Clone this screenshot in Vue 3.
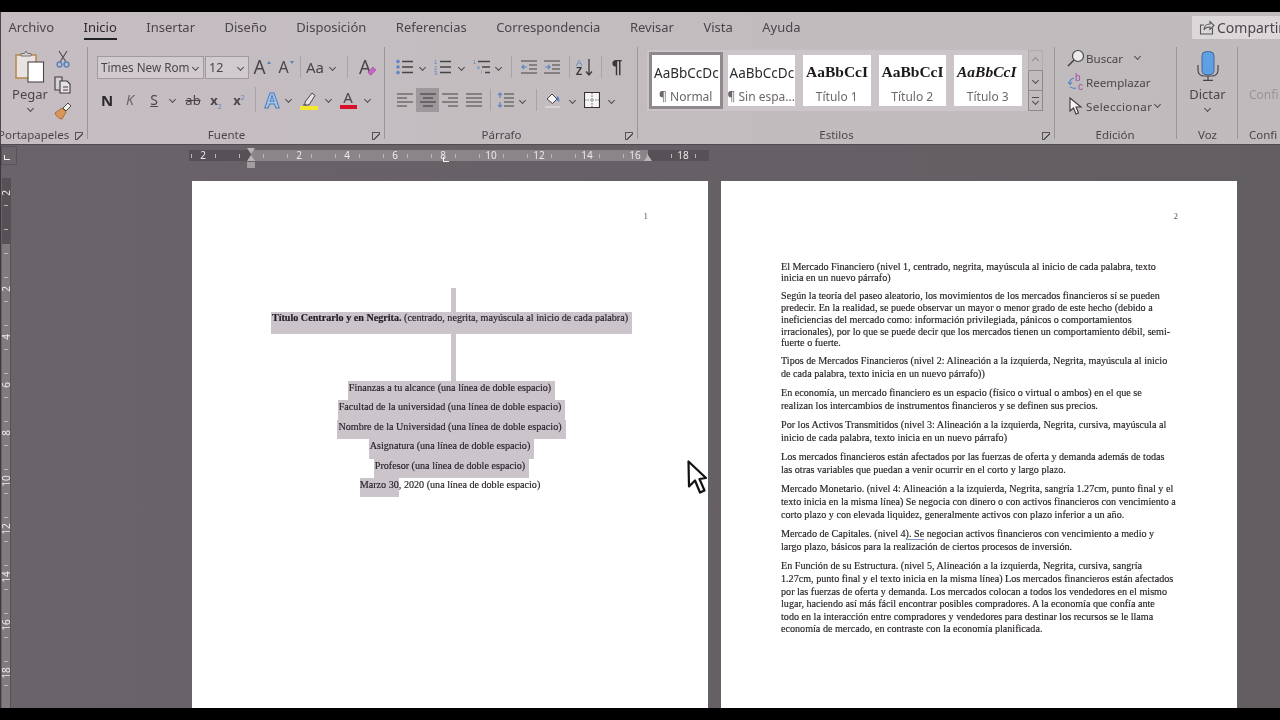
<script setup>
// marcas de la regla: numero cada 2 cm, raya a cada lado, hueco en el cm impar
function buildCells(from, to) {
  const cells = []
  for (let k = from; k <= to; k++) {
    let kind = 'none'
    if (k !== 0 && k % 4 === 0) kind = 'num'
    else if (k % 2 !== 0) kind = 'tick'
    cells.push({ k, kind, text: Math.abs(k / 2) })
  }
  return cells
}

const hCells = buildCells(-5, 37)
const vCells = buildCells(-4, 38)

const tabs = ['Archivo', 'Inicio', 'Insertar', 'Diseño', 'Disposición', 'Referencias', 'Correspondencia', 'Revisar', 'Vista', 'Ayuda']

const styles = [
  { sample: 'AaBbCcDc', name: '¶ Normal', kind: 'normal selected' },
  { sample: 'AaBbCcDc', name: '¶ Sin espa...', kind: 'normal' },
  { sample: 'AaBbCcI', name: 'Título 1', kind: 'heading' },
  { sample: 'AaBbCcI', name: 'Título 2', kind: 'heading' },
  { sample: 'AaBbCcI', name: 'Título 3', kind: 'heading italic' }
]
</script>

<template>
  <div class="app">
    <div class="topbar"></div>

    <!-- pestañas -->
    <div class="tabs">
      <span v-for="t in tabs" :key="t" class="tab" :class="{ active: t === 'Inicio' }">{{ t }}</span>
      <div class="share">
        <svg width="16" height="15" viewBox="0 0 16 15" fill="none" stroke="#555" stroke-width="1.1">
          <path d="M5 5H1.5v9h12V8" />
          <path d="M5 10c0-4 3-6 6-6V1.5l4 4-4 4V7c-3 0-5 1-6 3z" />
        </svg>
        <span>Compartir</span>
      </div>
    </div>

    <!-- cinta de opciones -->
    <div class="ribbon">
      <section class="grp grp-clip">
        <div class="grp-body clip-body">
          <div class="big-col paste">
            <svg width="30" height="33" viewBox="0 0 30 33">
              <rect x="1" y="5" width="20" height="23" fill="#e9e4e2" stroke="#b98a52" stroke-width="1.6" />
              <path d="M6 6V3.5h3.5L11 1l1.5 2.5H16V6z" fill="#d8d3d3" stroke="#77716f" />
              <rect x="13" y="12" width="15.5" height="20" fill="#fff" stroke="#4a4548" stroke-width="1.1" />
            </svg>
            <span class="big-label">Pegar</span>
            <i class="chev"></i>
          </div>
          <div class="clip-tools">
            <svg width="14" height="18" viewBox="0 0 14 18" fill="none">
              <path d="M3 1l7 11M11 1L4 12" stroke="#55505a" stroke-width="1.2" />
              <circle cx="3.5" cy="14.5" r="2.4" stroke="#5a83bd" stroke-width="1.5" />
              <circle cx="10.5" cy="14.5" r="2.4" stroke="#5a83bd" stroke-width="1.5" />
            </svg>
            <svg width="18" height="18" viewBox="0 0 18 18" fill="#d6d1d4" stroke="#3f3a3f" stroke-width="1.1">
              <path d="M1 1h7v13H1z" />
              <path d="M6 5h7l3 3v9H6z" fill="#e6e2e4" />
              <path d="M9 11h5M9 14h5" />
            </svg>
            <svg width="18" height="18" viewBox="0 0 18 18">
              <path d="M9 6l5-5 3 3-5 5z" fill="#f2efe9" stroke="#4d484c" />
              <path d="M1 11l7-5 4 4-4 7c-3 0-6-3-7-6z" fill="#d9955a" stroke="#a66d3a" />
            </svg>
          </div>
        </div>
        <div class="grp-label clip-label">Portapapeles</div>
        <i class="launcher"></i>
      </section>

      <section class="grp grp-font">
        <div class="grp-body">
          <div class="font-row1">
            <div class="combo combo-font"><span>Times New Rom</span><i class="chev"></i></div>
            <div class="combo combo-size"><span>12</span><i class="chev"></i></div>
            <span class="cell"><span class="glyph-a">A</span><i class="caret up"></i></span>
            <span class="cell"><span class="glyph-a small">A</span><i class="caret down"></i></span>
            <i class="vsep"></i>
            <span class="cell"><span class="glyph-aa">Aa</span></span>
            <i class="chev"></i>
            <i class="vsep"></i>
            <span class="cell clear-fmt">
              <span class="glyph-a">A</span>
              <svg class="eraser" width="10" height="10" viewBox="0 0 10 10"><path d="M1 6l5-5 3 3-5 5H3z" fill="#c763c4" stroke="#9a4d9e" stroke-width=".6" /></svg>
            </span>
          </div>
          <div class="font-row2">
            <b class="fmt bold">N</b>
            <i class="fmt ital">K</i>
            <u class="fmt">S</u>
            <i class="chev"></i>
            <s class="fmt strike">ab</s>
            <span class="fmt sx">x<sub>2</sub></span>
            <span class="fmt sx">x<sup>2</sup></span>
            <i class="vsep tall sep-start"></i>
            <span class="effect-a">A</span>
            <i class="chev"></i>
            <svg width="20" height="20" viewBox="0 0 20 20">
              <path d="M6 12l7-9 3 2.500-6 9.500H6z" fill="#e6e1e3" stroke="#4a4548" />
              <path d="M4 15h3" stroke="#4a4548" />
              <rect x="1" y="16" width="18" height="4.500" fill="#f3e82e" />
            </svg>
            <i class="chev"></i>
            <span class="color-a">A<i></i></span>
            <i class="chev"></i>
          </div>
        </div>
        <div class="grp-label shift-label">Fuente</div>
        <i class="launcher"></i>
      </section>

      <section class="grp grp-para">
        <div class="grp-body">
          <div class="para-row1">
            <svg width="17" height="16" viewBox="0 0 17 16" stroke="#444" stroke-width="1.300">
              <path d="M6 2.500h11M6 8h11M6 13.500h11" />
              <g fill="#5d85c2" stroke="none"><circle cx="2" cy="2.500" r="1.800" /><circle cx="2" cy="8" r="1.800" /><circle cx="2" cy="13.500" r="1.800" /></g>
            </svg>
            <i class="chev"></i>
            <svg width="17" height="16" viewBox="0 0 17 16" stroke="#444" stroke-width="1.300">
              <path d="M6 2.500h11M6 8h11M6 13.500h11" />
              <g fill="#5d85c2" stroke="none" font-size="6" font-family="Liberation Sans, sans-serif"><text x="0" y="5">1</text><text x="0" y="10.500">2</text><text x="0" y="16">3</text></g>
            </svg>
            <i class="chev"></i>
            <svg width="17" height="16" viewBox="0 0 17 16" stroke="#444" stroke-width="1.300">
              <path d="M5 2.500h12M9 8h8M12 13.500h5" />
              <g fill="#5d85c2" stroke="none" font-size="5" font-family="Liberation Sans, sans-serif"><text x="0" y="5">1</text><text x="4" y="10">a</text><text x="8" y="15">i</text></g>
            </svg>
            <i class="chev"></i>
            <i class="vsep"></i>
            <svg width="16" height="14" viewBox="0 0 16 14" fill="none" stroke="#444" stroke-width="1.200">
              <path d="M0 1h16M8 5h8M8 9h8M0 13h16" />
              <path d="M6 7H1M3 5L1 7l2 2" stroke="#5d85c2" />
            </svg>
            <svg width="16" height="14" viewBox="0 0 16 14" fill="none" stroke="#444" stroke-width="1.200">
              <path d="M0 1h16M8 5h8M8 9h8M0 13h16" />
              <path d="M1 7h5M4 5l2 2-2 2" stroke="#5d85c2" />
            </svg>
            <i class="vsep"></i>
            <svg class="sort-icon" width="18" height="18" viewBox="0 0 18 18" fill="none" font-family="Liberation Sans, sans-serif">
              <text x="0" y="8" font-size="9.500" fill="#5d85c2">A</text>
              <text x="0" y="17" font-size="10" font-weight="700" fill="#333">Z</text>
              <path d="M13 1v16M10 13.500l3 3.500 3-3.500" stroke="#3d383d" stroke-width="1.300" />
            </svg>
            <i class="vsep"></i>
            <span class="pilcrow">¶</span>
          </div>
          <div class="para-row2">
            <svg width="16" height="14" viewBox="0 0 16 14" stroke="#444" stroke-width="1.200"><path d="M0 1h16M0 5h10M0 9h16M0 13h10" /></svg>
            <span class="align-on">
              <svg width="16" height="14" viewBox="0 0 16 14" stroke="#333" stroke-width="1.200"><path d="M0 1h16M3 5h10M0 9h16M3 13h10" /></svg>
            </span>
            <svg width="16" height="14" viewBox="0 0 16 14" stroke="#444" stroke-width="1.200"><path d="M0 1h16M6 5h10M0 9h16M6 13h10" /></svg>
            <svg width="16" height="14" viewBox="0 0 16 14" stroke="#444" stroke-width="1.200"><path d="M0 1h16M0 5h16M0 9h16M0 13h16" /></svg>
            <i class="vsep"></i>
            <svg width="17" height="16" viewBox="0 0 17 16" fill="none" stroke="#444" stroke-width="1.200">
              <path d="M7 2h10M7 6h10M7 10h10M7 14h10" />
              <path d="M3 1v5M1 3l2-2 2 2M3 10v5M1 13l2 2 2-2" stroke="#5d85c2" />
            </svg>
            <i class="chev"></i>
            <i class="vsep"></i>
            <svg width="16" height="17" viewBox="0 0 16 17">
              <path d="M2 7l5-5 5 5-4.500 4.500z" fill="#f4f2f2" stroke="#444" />
              <path d="M12 4c2 1 3 3 2 6-2-1-3-3-2-6z" fill="#5d85c2" />
              <rect x="0" y="14" width="15" height="2" fill="#d7d2d5" />
            </svg>
            <i class="chev"></i>
            <svg width="16" height="16" viewBox="0 0 16 16" fill="#f7f6f7" stroke="#333" stroke-width="1.100">
              <path d="M.5.500h15v15H.5z" />
              <path d="M8 1v14M1 8h14" stroke="#777" stroke-dasharray="1.500 1" />
            </svg>
            <i class="chev"></i>
          </div>
        </div>
        <div class="grp-label shift-label">Párrafo</div>
        <i class="launcher"></i>
      </section>

      <section class="grp grp-styles">
        <div class="grp-body">
          <div class="gallery">
            <div class="cards">
              <div v-for="s in styles" :key="s.name" class="card" :class="s.kind">
                <span class="card-sample">{{ s.sample }}</span>
                <span class="card-name">{{ s.name }}</span>
              </div>
            </div>
            <div class="scroller">
              <span class="scroll-btn disabled"><i class="chev flip"></i></span>
              <span class="scroll-btn"><i class="chev"></i></span>
              <span class="scroll-btn more"><i class="bar"></i><i class="chev"></i></span>
            </div>
          </div>
        </div>
        <div class="grp-label shift-label">Estilos</div>
        <i class="launcher"></i>
      </section>

      <section class="grp grp-edit">
        <div class="grp-body edit-body">
          <div class="edit-row">
            <svg width="18" height="18" viewBox="0 0 18 18" fill="none">
              <circle cx="11" cy="7" r="5.500" fill="#eeeaec" stroke="#444" stroke-width="1.200" />
              <path d="M7 11l-6 6" stroke="#444" stroke-width="1.600" />
            </svg>
            <span class="edit-text">Buscar</span><i class="chev buscar-chev"></i>
          </div>
          <div class="edit-row">
            <svg width="18" height="18" viewBox="0 0 18 18" fill="none">
              <text x="8" y="8" font-size="10" fill="#a24fa8" font-family="Liberation Sans, sans-serif">b</text>
              <text x="11" y="17" font-size="10" fill="#a24fa8" font-family="Liberation Sans, sans-serif">c</text>
              <path d="M7 5C3 6 2 9 3 11M1 9l2 2.500L5 9M9 15c-2 1-4 0-6-1" stroke="#5d85c2" stroke-width="1.200" />
            </svg>
            <span class="edit-text">Reemplazar</span>
          </div>
          <div class="edit-row">
            <svg width="16" height="18" viewBox="0 0 16 18">
              <path d="M2 1v13l3.500-3 2.500 6 2.500-1-2.500-6H13z" fill="#f5f3f4" stroke="#3d383d" stroke-width="1.100" />
            </svg>
            <span class="edit-text wide">Seleccionar</span><i class="chev select-chev"></i>
          </div>
        </div>
        <div class="grp-label edit-label">Edición</div>
      </section>

      <section class="grp grp-voice">
        <div class="grp-body">
          <div class="big-col dictar">
            <svg width="22" height="30" viewBox="0 0 22 30" fill="none">
              <rect x="5" y="0.700" width="12" height="23" rx="4" fill="#5f9fe3" stroke="#40699c" />
              <path d="M1 14v5c0 4 3 6 6 6h8c3 0 6-2 6-6v-5" stroke="#4a4548" stroke-width="1.200" />
              <path d="M11 25v4M6 29.300h10" stroke="#4a4548" stroke-width="1.200" />
            </svg>
            <span class="big-label">Dictar</span>
            <i class="chev"></i>
          </div>
        </div>
        <div class="grp-label">Voz</div>
      </section>

      <section class="grp grp-conf">
        <div class="grp-body conf-body"><span class="conf-off">Confi</span></div>
        <div class="grp-label conf-label">Confi</div>
      </section>
    </div>

    <!-- zona del documento -->
    <div class="workspace">
      <div class="ruler-row">
        <div class="corner"><i></i></div>
        <div class="hruler">
          <div class="h-cells">
            <span v-for="c in hCells" :key="c.k" class="rcell">
              <template v-if="c.kind === 'num'">{{ c.text }}</template>
              <i v-else-if="c.kind === 'tick'" class="htick"></i>
            </span>
          </div>
          <i class="mark mark-first"></i>
          <i class="mark mark-hang"></i>
          <i class="mark mark-box"></i>
          <i class="mark mark-right"></i>
          <i class="mark mark-tab"></i>
        </div>
      </div>

      <div class="doc-row">
        <div class="vruler">
          <span v-for="c in vCells" :key="c.k" class="vcell">
            <span v-if="c.kind === 'num'" class="vnum">{{ c.text }}</span>
            <i v-else-if="c.kind === 'tick'" class="vtick"></i>
          </span>
        </div>

        <div class="page page-one">
          <div class="page-num">1</div>
          <div class="empty-par"><i></i></div>
          <div class="title-line">
            <span class="sel"><b>Título Centrarlo y en Negrita.</b> (centrado, negrita, mayúscula al inicio de cada palabra)</span>
          </div>
          <div class="empty-par second"><i></i></div>
          <div class="cover-line"><span class="sel">Finanzas a tu alcance (una línea de doble espacio)</span></div>
          <div class="cover-line"><span class="sel">Facultad de la universidad (una línea de doble espacio)</span></div>
          <div class="cover-line"><span class="sel">Nombre de la Universidad (una línea de doble espacio)</span></div>
          <div class="cover-line"><span class="sel">Asignatura (una línea de doble espacio)</span></div>
          <div class="cover-line"><span class="sel">Profesor (una línea de doble espacio)</span></div>
          <div class="cover-line"><span><span class="sel no-mark">Marzo 30</span>, 2020 (una línea de doble espacio)</span></div>
        </div>

        <div class="page page-two">
          <div class="page-num">2</div>
          <div class="body-text">
            <p class="tight">El Mercado Financiero (nivel 1, centrado, negrita, mayúscula al inicio de cada palabra, texto<br>inicia en un nuevo párrafo)</p>
            <p class="tight">Según la teoría del paseo aleatorio, los movimientos de los mercados financieros sí se pueden<br>predecir. En la realidad, se puede observar un mayor o menor grado de este hecho (debido a<br>ineficiencias del mercado como: información privilegiada, pánicos o comportamientos<br>irracionales), por lo que se puede decir que los mercados tienen un comportamiento débil, semi-<br>fuerte o fuerte.</p>
            <p>Tipos de Mercados Financieros (nivel 2: Alineación a la izquierda, Negrita, mayúscula al inicio<br>de cada palabra, texto inicia en un nuevo párrafo))</p>
            <p>En economía, un mercado financiero es un espacio (físico o virtual o ambos) en el que se<br>realizan los intercambios de instrumentos financieros y se definen sus precios.</p>
            <p>Por los Activos Transmitidos (nivel 3: Alineación a la izquierda, Negrita, cursiva, mayúscula al<br>inicio de cada palabra, texto inicia en un nuevo párrafo)</p>
            <p>Los mercados financieros están afectados por las fuerzas de oferta y demanda además de todas<br>las otras variables que puedan a venir ocurrir en el corto y largo plazo.</p>
            <p>Mercado Monetario. (nivel 4: Alineación a la izquierda, Negrita, sangría 1.27cm, punto final y el<br>texto inicia en la misma línea) Se negocia con dinero o con activos financieros con vencimiento a<br>corto plazo y con elevada liquidez, generalmente activos con plazo inferior a un año.</p>
            <p>Mercado de Capitales. (nivel 4<span class="smudge">). Se</span> negocian activos financieros con vencimiento a medio y<br>largo plazo, básicos para la realización de ciertos procesos de inversión.</p>
            <p class="last">En Función de su Estructura. (nivel 5, Alineación a la izquierda, Negrita, cursiva, sangría<br>1.27cm, punto final y el texto inicia en la misma línea) Los mercados financieros están afectados<br>por las fuerzas de oferta y demanda. Los mercados colocan a todos los vendedores en el mismo<br>lugar, haciendo así más fácil encontrar posibles compradores. A la economía que confía ante<br>todo en la interacción entre compradores y vendedores para destinar los recursos se le llama<br>economía de mercado, en contraste con la economía planificada.</p>
          </div>
        </div>
      </div>
    </div>

    <div class="bottombar"></div>

    <!-- puntero del video -->
    <svg class="pointer" width="20" height="34" viewBox="0 0 20 34">
      <path d="M1.500 1.500l.5 25 6-6 5 12 4.500-2-5-11.500 6.500-1z" fill="#fff" stroke="#111" stroke-width="2.200" stroke-linejoin="round" />
    </svg>
  </div>
</template>

<style scoped>
.app {
  position: relative;
  width: 1280px;
  height: 720px;
  overflow: hidden;
  display: flex;
  flex-direction: column;
  background: #000;
  font-family: "Noto Sans", "Open Sans", sans-serif;
  color: #4b454b;
  filter: blur(0.4px);
}

.topbar {
  height: 12px;
  flex: none;
  background: #000;
}

.bottombar {
  height: 12px;
  flex: none;
  background: #000;
}

.tabs {
  height: 33px;
  flex: none;
  display: flex;
  align-items: center;
  padding-left: 7.500px;
  gap: 29.500px;
  font-size: 13px;
  background: linear-gradient(90deg, #c5bdc2, #bfbbbc);
  border-left: 1px solid #4a464a;
  box-sizing: border-box;
}

.tab {
  position: relative;
  white-space: nowrap;
  margin-top: -3px;
}

.tab.active {
  color: #2e2a2e;
}

.tab.active::after {
  content: "";
  position: absolute;
  left: 0;
  right: 0;
  bottom: -4px;
  height: 2.500px;
  background: #222;
}

.share {
  margin-left: auto;
  width: 88px;
  flex: none;
  height: 23px;
  display: flex;
  align-items: center;
  gap: 2px;
  padding-left: 7px;
  box-sizing: border-box;
  margin-top: -3px;
  background: #dcd8da;
  white-space: nowrap;
  overflow: hidden;
  font-size: 14px;
}

.share svg {
  flex: none;
}

.ribbon {
  height: 100px;
  flex: none;
  display: flex;
  padding-top: 2px;
  box-sizing: border-box;
  background: linear-gradient(90deg, #c5bdc2, #bfbbbc);
  border-left: 1px solid #4a464a;
  border-bottom: 1px solid #4f4a4f;
}

.grp {
  position: relative;
  flex: none;
  height: 95px;
  display: flex;
  flex-direction: column;
  box-sizing: border-box;
}

.grp::after {
  content: "";
  position: absolute;
  right: 0;
  top: 0;
  bottom: 3px;
  width: 1px;
  background: #9b959a;
}

.grp-clip { width: 87px; }
.grp-font { width: 297px; }
.grp-para { width: 253px; }
.grp-styles { width: 417px; }
.grp-edit { width: 122px; }
.grp-voice { width: 61px; }
.grp-conf { width: 42px; overflow: hidden; }
.grp-conf::after { display: none; }

.grp-body {
  height: 81px;
  flex: none;
}

.grp-label {
  height: 14px;
  line-height: 14px;
  text-align: center;
  font-size: 11.500px;
  white-space: nowrap;
}

.shift-label {
  padding-right: 20px;
}

.edit-label {
  padding-right: 2px;
}

.clip-label {
  text-align: left;
  margin-left: -3px;
}

.launcher {
  position: absolute;
  right: 5px;
  bottom: 2px;
  width: 7px;
  height: 7px;
  border-left: 1px solid #555;
  border-top: 1px solid #555;
  background: linear-gradient(135deg, transparent 46%, #555 46%, #555 58%, transparent 58%);
}

.chev {
  display: block;
  width: 4px;
  height: 4px;
  border-right: 1.200px solid #4f4a4f;
  border-bottom: 1.200px solid #4f4a4f;
  transform: rotate(45deg);
}

.chev.flip {
  transform: rotate(225deg);
  border-color: #8d878c;
}

.vsep {
  display: block;
  width: 1px;
  height: 22px;
  background: #a9a3a8;
}

.vsep.tall {
  height: 25px;
}

/* portapapeles */
.clip-body {
  display: flex;
}

.big-col {
  display: flex;
  flex-direction: column;
  align-items: center;
}

.paste {
  width: 58px;
  padding-top: 3px;
}

.big-label {
  font-size: 13px;
  line-height: 18px;
  margin-top: 2px;
  white-space: nowrap;
}

.big-col .chev {
  margin-top: 3px;
}

.clip-tools {
  width: 14px;
  margin-left: -3px;
  padding-top: 3px;
  height: 70px;
  display: flex;
  flex-direction: column;
  align-items: center;
  justify-content: space-between;
}

/* fuente */
.font-row1,
.font-row2,
.para-row1,
.para-row2 {
  display: grid;
  align-items: center;
  justify-items: center;
  padding-left: 9px;
}

.font-row1 {
  grid-template-columns: 108px 44px 26px 22px 6px 24px 10px 20px 16px;
  height: 24px;
  margin-top: 8px;
}

.font-row2 {
  grid-template-columns: 20px 26px 22px 14px 28px 18px 28px 9px 20px 12px 30px 8px 32px 6px;
  height: 24px;
  margin-top: 8px;
}

.combo {
  display: flex;
  align-items: center;
  justify-content: space-between;
  height: 23px;
  box-sizing: border-box;
  border: 1px solid #a09a9f;
  background: #d1cbcf;
  font-size: 11.700px;
  padding: 0 5px 0 3px;
  white-space: nowrap;
  justify-self: start;
}

.combo-font {
  width: 107px;
}

.combo-size {
  width: 44px;
  font-size: 12.500px;
}

.cell {
  position: relative;
  display: flex;
  align-items: center;
}

.glyph-a {
  font-size: 19px;
  line-height: 22px;
  color: #4a454a;
}

.glyph-a.small {
  font-size: 16px;
}

.caret {
  width: 0;
  height: 0;
  margin: -10px 0 0 1px;
  border-left: 2.500px solid transparent;
  border-right: 2.500px solid transparent;
}

.caret.up {
  border-bottom: 3px solid #5c82ba;
}

.caret.down {
  border-top: 3px solid #5c82ba;
}

.glyph-aa {
  font-size: 15px;
}

.clear-fmt .eraser {
  position: absolute;
  right: -6px;
  bottom: 2px;
}

.fmt {
  font-size: 14px;
  line-height: 20px;
  color: #4a454a;
  text-decoration-thickness: 1px;
}

.fmt.bold {
  color: #2c282c;
  font-size: 15px;
}

.fmt.ital {
  color: #6a646a;
}

.fmt.strike {
  font-size: 13px;
}

.fmt.sx {
  font-weight: 700;
  font-size: 13px;
}

.fmt sub,
.fmt sup {
  font-size: 7px;
  font-weight: 400;
  color: #5c82ba;
  line-height: 0;
}

.sep-start {
  justify-self: start;
  margin-left: 2px;
}

.effect-a {
  font-size: 21px;
  line-height: 22px;
  font-weight: 700;
  color: #a9c5ea;
  -webkit-text-stroke: 1px #4a7fc2;
}

.color-a {
  display: flex;
  flex-direction: column;
  align-items: center;
  font-size: 15px;
  line-height: 15px;
  color: #4a454a;
}

.color-a i {
  display: block;
  width: 17px;
  height: 4px;
  background: #d8102a;
}

/* parrafo */
.para-row1 {
  grid-template-columns: 20px 16px 24px 14px 26px 8px 19px 16px 30px 4px 28px 4px 28px;
  height: 24px;
  margin-top: 8px;
}

.para-row2 {
  grid-template-columns: 21px 25px 20px 27px 6px 24px 10px 18px 16px 22px 18px 20px;
  height: 24px;
  margin-top: 9px;
}

.sort-icon {
  overflow: visible;
}

.pilcrow {
  font-family: "Liberation Sans", sans-serif;
  font-size: 19px;
  font-weight: 700;
  color: #3a353a;
  line-height: 20px;
}

.align-on {
  width: 23px;
  height: 24px;
  display: flex;
  align-items: center;
  justify-content: center;
  background: #9e989d;
}

/* estilos */
.gallery {
  display: flex;
  margin: 3px 0 0 9px;
  height: 61px;
}

.cards {
  width: 381px;
  display: flex;
  gap: 8px;
  padding: 5px 0 0 5px;
  box-sizing: border-box;
  background: #cbc5ca;
}

.card {
  width: 67.500px;
  height: 51px;
  flex: none;
  background: #fff;
  display: flex;
  flex-direction: column;
  align-items: center;
  overflow: hidden;
  white-space: nowrap;
}

.card.selected {
  outline: 3px solid #8f898e;
}

.card-sample {
  height: 34px;
  line-height: 36px;
  font-size: 13.500px;
  color: #2e2a2e;
  width: 100%;
  overflow: hidden;
  padding-left: 2px;
  box-sizing: border-box;
}

.card.heading .card-sample {
  font-family: "Liberation Serif", serif;
  font-weight: 700;
  font-size: 15.500px;
  line-height: 34px;
  color: #1c181c;
  padding-left: 3px;
}

.card.italic .card-sample {
  font-style: italic;
}

.card-name {
  font-size: 12px;
  line-height: 19px;
  color: #6d676c;
}

.scroller {
  display: flex;
  flex-direction: column;
  width: 15px;
}

.scroll-btn {
  flex: 1;
  display: flex;
  flex-direction: column;
  align-items: center;
  justify-content: center;
  gap: 1px;
  box-sizing: border-box;
  border: 1px solid #8f898e;
  border-top-width: 0;
}

.scroll-btn.disabled {
  border: 1px solid #b2acb1;
  border-bottom-color: #8f898e;
}

.scroll-btn.more .bar {
  display: block;
  width: 7px;
  height: 1px;
  background: #4f4a4f;
}

/* edicion */
.edit-body {
  padding: 0 0 0 12px;
  margin-top: -1px;
  margin-bottom: 1px;
  display: flex;
  flex-direction: column;
}

.edit-row {
  height: 24px;
  display: flex;
  align-items: center;
  font-size: 11.600px;
  white-space: nowrap;
}

.edit-row svg {
  width: 18px;
  flex: none;
}

.edit-text {
  margin-left: 1px;
}

.edit-text.wide {
  letter-spacing: 0.4px;
}

.buscar-chev {
  margin-left: 12px;
  margin-top: -3px;
}

.select-chev {
  margin-left: 3px;
  margin-top: -3px;
}

/* voz y confidencialidad */
.dictar {
  padding-top: 4px;
}

.dictar .big-label {
  margin-top: 4px;
}

.conf-body {
  padding: 35px 0 0 11px;
  box-sizing: border-box;
}

.conf-off {
  font-size: 12px;
  color: #9a9499;
  white-space: nowrap;
}

.conf-label {
  text-align: left;
  padding-left: 11px;
}

/* documento */
.workspace {
  flex: 1;
  min-height: 0;
  display: flex;
  flex-direction: column;
  background: linear-gradient(90deg, #6a636a, #625e62);
  border-left: 1px solid #3b373b;
}

.ruler-row {
  height: 33px;
  flex: none;
  display: flex;
  align-items: flex-start;
}

.corner {
  width: 16px;
  height: 19px;
  margin-top: 1px;
  box-sizing: border-box;
  border: 1px solid #5a545a;
  position: relative;
}

.corner i {
  position: absolute;
  left: 2px;
  bottom: 4px;
  width: 5px;
  height: 4px;
  border-left: 1.500px solid #eee;
  border-bottom: 1.500px solid #eee;
}

.hruler {
  position: relative;
  width: 520px;
  height: 11px;
  margin: 5px 0 0 172px;
  background: linear-gradient(90deg, #575157 0, #575157 62px, #8b858a 62px, #8b858a 459px, #575157 459px);
}

.h-cells {
  display: flex;
  height: 100%;
  margin-left: -4px;
}

.rcell {
  width: 12px;
  flex: none;
  display: flex;
  align-items: center;
  justify-content: center;
  font-size: 10px;
  line-height: 11px;
  color: #ece8ec;
}

.htick {
  display: block;
  width: 1px;
  height: 4px;
  background: #b9b3b8;
}

.mark {
  position: absolute;
  display: block;
}

.mark-first,
.mark-hang,
.mark-right {
  width: 0;
  height: 0;
  border-left: 4px solid transparent;
  border-right: 4px solid transparent;
}

.mark-first {
  left: 58px;
  top: -2px;
  border-top: 6px solid #bbb5ba;
}

.mark-hang {
  left: 58px;
  top: 5px;
  border-bottom: 6px solid #bbb5ba;
}

.mark-box {
  left: 58px;
  top: 12px;
  width: 8px;
  height: 6px;
  background: #a39da2;
}

.mark-right {
  left: 455px;
  top: 5px;
  border-bottom: 6px solid #bbb5ba;
}

.mark-tab {
  left: 254px;
  top: 7px;
  width: 5px;
  height: 4px;
  border-left: 1.500px solid #f4f4f4;
  border-bottom: 1.500px solid #f4f4f4;
}

.doc-row {
  flex: 1;
  min-height: 0;
  display: flex;
}

.vruler {
  width: 9px;
  flex: none;
  margin-left: 1px;
  padding-top: 9px;
  box-sizing: border-box;
  display: flex;
  flex-direction: column;
  background: linear-gradient(180deg, #575157 0, #575157 66px, #817b80 66px);
  border-right: 1px solid #565056;
}

.vcell {
  height: 12px;
  flex: none;
  display: flex;
  align-items: center;
  justify-content: center;
  font-size: 10px;
  color: #ece8ec;
}

.vnum {
  display: block;
  transform: rotate(-90deg);
  line-height: 10px;
}

.vtick {
  display: block;
  width: 4px;
  height: 1px;
  background: #b9b3b8;
}

.page {
  width: 516px;
  flex: none;
  margin-top: 3px;
  background: #fff;
  box-sizing: border-box;
  font-family: "Liberation Serif", "Times New Roman", serif;
  font-size: 10.150px;
  color: #1f1a20;
  -webkit-text-stroke: 0.15px #2a252b;
  white-space: nowrap;
  overflow: hidden;
}

.page-one {
  margin-left: 181px;
  padding: 30px 60px 0;
}

.page-two {
  margin-left: 13px;
  padding: 30px 59px 0 60px;
}

.page-num {
  text-align: right;
  font-size: 9px;
  line-height: 10px;
  color: #5a555a;
  -webkit-text-stroke: 0;
}

.empty-par {
  height: 91px;
  display: flex;
  align-items: flex-end;
  padding-left: 199px;
}

.empty-par i {
  display: block;
  width: 5px;
  height: 24px;
  background: #cbc5cb;
}

.empty-par.second {
  height: 47px;
}

.empty-par.second i {
  height: 47px;
}

.title-line {
  height: 22px;
  display: flex;
  justify-content: center;
  line-height: 12px;
}

.title-line .sel {
  height: 22px;
}

.cover-line {
  height: 19.400px;
  display: flex;
  justify-content: center;
  line-height: 14px;
}

.cover-line > .sel {
  height: 19.400px;
}

.sel {
  display: block;
  background: #cbc5cb;
  box-shadow: 4px 0 0 #cbc5cb, -1px 0 0 #cbc5cb;
}

.sel.no-mark {
  display: inline-block;
  padding-bottom: 5.400px;
  box-shadow: none;
}

.body-text {
  margin-top: 39.500px;
  line-height: 12.900px;
}

.body-text p {
  margin: 0 0 6.200px;
}

.body-text p.tight {
  line-height: 11.800px;
}

.body-text p.last {
  line-height: 12.600px;
}

.smudge {
  border-bottom: 1px solid #7f97d0;
}

.pointer {
  position: absolute;
  left: 687px;
  top: 460px;
}
</style>

<style>
html,
body {
  background: #000;
}
</style>
